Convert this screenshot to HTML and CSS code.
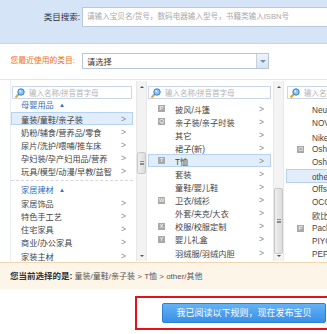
FILE: index.html
```html
<!DOCTYPE html>
<html lang="zh-CN">
<head>
<meta charset="utf-8">
<title>类目选择</title>
<link rel="stylesheet" href="styles.css">
</head>
<body>
<div class="page">
  <div class="top">
    <div class="lbl">类目搜索:</div>
    <div class="search-input">请输入宝贝名/货号，数码电器输入型号，书籍类输入ISBN号</div>
  </div>
  <div class="recent">
    <div class="lbl orange">您最近使用的类目:</div>
    <div class="select"><span>请选择</span><i class="sel-btn"><b></b></i></div>
  </div>

  <div class="panels">
    <div class="col col1">
      <div class="csearch"><svg class="mag" viewBox="0 0 10 10" width="10" height="10"><line x1="1.2" y1="8.8" x2="4" y2="6" stroke="#e9a323" stroke-width="2.2" stroke-linecap="round"/><circle cx="6" cy="4" r="3.2" fill="#8fc4f2" stroke="#2f7fd0" stroke-width="1"/><circle cx="5.2" cy="3.2" r="1" fill="#e6f3ff"/></svg><span>输入名称/拼音首字母</span></div>
      <div class="list">
        <div class="grp">母婴用品 <small>▲</small></div>
        <div class="row sel"><span>童装/童鞋/亲子装</span><em>&gt;</em></div>
        <div class="row"><span>奶粉/辅食/营养品/零食</span><em>&gt;</em></div>
        <div class="row"><span>尿片/洗护/喂哺/推车床</span><em>&gt;</em></div>
        <div class="row"><span>孕妇装/孕产妇用品/营养</span><em>&gt;</em></div>
        <div class="row"><span>玩具/模型/动漫/早教/益智</span><em>&gt;</em></div>
        <div class="sep"></div>
        <div class="grp">家居建材 <small>▲</small></div>
        <div class="row"><span>家居饰品</span><em>&gt;</em></div>
        <div class="row"><span>特色手工艺</span><em>&gt;</em></div>
        <div class="row"><span>住宅家具</span><em>&gt;</em></div>
        <div class="row"><span>商业/办公家具</span><em>&gt;</em></div>
        <div class="row"><span>家装主材</span><em>&gt;</em></div>
      </div>
    </div>
    <div class="vscroll s1">
      <div class="arr up"></div>
      <div class="track"><div class="thumb t1"><i></i></div></div>
      <div class="arr down"></div>
    </div>

    <div class="col col2">
      <div class="csearch"><svg class="mag" viewBox="0 0 10 10" width="10" height="10"><line x1="1.2" y1="8.8" x2="4" y2="6" stroke="#e9a323" stroke-width="2.2" stroke-linecap="round"/><circle cx="6" cy="4" r="3.2" fill="#8fc4f2" stroke="#2f7fd0" stroke-width="1"/><circle cx="5.2" cy="3.2" r="1" fill="#e6f3ff"/></svg><span>输入名称/拼音首字母</span></div>
      <div class="list l2">
        <div class="row"><b class="bd">P</b><span>披风/斗篷</span><em>&gt;</em></div>
        <div class="row"><b class="bd">Q</b><span>亲子装/亲子时装</span><em>&gt;</em></div>
        <div class="row"><b class="bd no"></b><span>其它</span><em>&gt;</em></div>
        <div class="row"><b class="bd no"></b><span>裙子(新)</span><em>&gt;</em></div>
        <div class="row sel"><b class="bd">T</b><span>T恤</span><em>&gt;</em></div>
        <div class="row"><b class="bd no"></b><span>套装</span><em>&gt;</em></div>
        <div class="row"><b class="bd no"></b><span>童鞋/婴儿鞋</span><em>&gt;</em></div>
        <div class="row"><b class="bd">W</b><span>卫衣/绒衫</span><em>&gt;</em></div>
        <div class="row"><b class="bd no"></b><span>外套/夹克/大衣</span><em>&gt;</em></div>
        <div class="row"><b class="bd">X</b><span>校服/校服定制</span><em>&gt;</em></div>
        <div class="row"><b class="bd">Y</b><span>婴儿礼盒</span><em>&gt;</em></div>
        <div class="row"><b class="bd no"></b><span>羽绒服/羽绒内胆</span><em>&gt;</em></div>
      </div>
    </div>
    <div class="vscroll s2">
      <div class="arr up"></div>
      <div class="track"><div class="thumb t2"><i></i></div></div>
      <div class="arr down"></div>
    </div>

    <div class="col col3">
      <div class="csearch"><svg class="mag" viewBox="0 0 10 10" width="10" height="10"><line x1="1.2" y1="8.8" x2="4" y2="6" stroke="#e9a323" stroke-width="2.2" stroke-linecap="round"/><circle cx="6" cy="4" r="3.2" fill="#8fc4f2" stroke="#2f7fd0" stroke-width="1"/><circle cx="5.2" cy="3.2" r="1" fill="#e6f3ff"/></svg><span>输入名称/拼音首字母</span></div>
      <div class="list l3">
        <div class="row"><b class="bd no"></b><span>Neue</span></div>
        <div class="row"><b class="bd no"></b><span>NOVA</span></div>
        <div class="row"><b class="bd no"></b><span>Nike/耐克</span></div>
        <div class="row"><b class="bd">O</b><span>Oshkosh</span></div>
        <div class="row"><b class="bd no"></b><span>Oshkosh</span></div>
        <div class="row sel"><b class="bd no"></b><span>other/其他</span></div>
        <div class="row"><b class="bd no"></b><span>Offside</span></div>
        <div class="row"><b class="bd no"></b><span>OCCHI</span></div>
        <div class="row"><b class="bd no"></b><span>欧比趣</span></div>
        <div class="row"><b class="bd">P</b><span>Paclantic</span></div>
        <div class="row"><b class="bd no"></b><span>PIYO</span></div>
        <div class="row"><b class="bd no"></b><span>PEPCO</span></div>
      </div>
    </div>
  </div>

  <div class="current">
    <strong>您当前选择的是:</strong> 童装/童鞋/亲子装 &gt; T恤 &gt; other/其他
  </div>

  <div class="action">
    <div class="redbox">
      <button class="publish">我已阅读以下规则，现在发布宝贝</button>
    </div>
  </div>
</div>
</body>
</html>
```

FILE: styles.css
```css
* { box-sizing: border-box; }
html, body { margin: 0; padding: 0; }
body {
  width: 327px;
  height: 334px;
  overflow: hidden;
  background: #fff;
  font-family: "Liberation Sans", "Noto Sans CJK SC", sans-serif;
  font-size: 8px;
  color: #333;
}
.page { width: 327px; }

.top {
  height: 44px;
  background: #d6e4f8;
  border-bottom: 1px solid #c4d5ee;
  display: flex;
  align-items: flex-start;
  padding-top: 7px;
}
.lbl {
  width: 82px;
  flex: none;
  text-align: right;
  padding-right: 2px;
  line-height: 20px;
  color: #333;
  font-size: 8.5px;
}
.search-input {
  flex: 1;
  height: 20px;
  line-height: 18px;
  background: #fff;
  border: 1px solid #b9c8dc;
  border-right: none;
  padding-left: 4px;
  color: #a8a8a8;
  font-size: 7.6px;
  white-space: nowrap;
  overflow: hidden;
}

.recent {
  height: 36px;
  border-bottom: 1px solid #e1e6ec;
  display: flex;
  align-items: flex-start;
  padding-top: 9px;
}
.recent .lbl { line-height: 16px; padding-right: 7px; font-size: 7.8px; }
.orange { color: #f26f12; }
.select {
  width: 187px;
  height: 16px;
  border: 1px solid #b8c5d6;
  background: #fff;
  display: flex;
  align-items: center;
  justify-content: space-between;
  padding-left: 4px;
  color: #333;
  font-size: 8.2px;
}
.sel-btn {
  width: 12px;
  height: 14px;
  background: linear-gradient(#eef4fb, #d6e3f2);
  border-left: 1px solid #c3d1e3;
  display: flex;
  align-items: center;
  justify-content: center;
}
.sel-btn b {
  width: 0; height: 0;
  border-left: 3px solid transparent;
  border-right: 3px solid transparent;
  border-top: 3px solid #7a8fa8;
}

.panels {
  height: 182px;
  display: flex;
  padding-left: 10px;
  background: #fff;
  overflow: hidden;
}
.col {
  flex: none;
  display: flex;
  flex-direction: column;
  padding-top: 6px;
  background: #fff;
  overflow: hidden;
}
.col1 { width: 123px; border-left: 1px solid #e8eef6; }
.col2 { width: 123px; margin-left: 1px; }
.col3 { width: 44px; margin-left: 1px; }

.csearch {
  height: 13px;
  border: 1px solid #c9d7e8;
  background: #fff;
  display: flex;
  align-items: center;
  padding-left: 2px;
  color: #b3b3b3;
  font-size: 7.5px;
  white-space: nowrap;
  overflow: hidden;
  flex: none;
}
.col1 .csearch { margin-left: 1px; margin-right: 1px; }
.col3 .csearch { margin-left: 2px; }
.mag { flex: none; margin-right: 4px; }

.list { flex: 1; font-size: 8.2px; }
.col1 .list { padding-top: 0; }
.l2 { padding-top: 3px; }
.l3 { padding-top: 5px; }

.row {
  height: 13.1px;
  display: flex;
  align-items: center;
  white-space: nowrap;
  border: 1px solid transparent;
  color: #444;
}
.col1 .row { padding-left: 9px; padding-right: 6px; }
.row span { flex: 1; overflow: hidden; }
.row em { font-style: normal; color: #8a8a8a; font-size: 8.5px; }
.row.sel { background: #e1edfb; border-color: #b7d2ef; }

.grp {
  height: 13.1px;
  line-height: 13px;
  padding-left: 10px;
  color: #2f6fc0;
}
.grp small { font-size: 6px; margin-left: 3px; vertical-align: 1px; }
.sep {
  height: 0;
  border-top: 1px dashed #d6d6d6;
  margin: 2px 0 3px;
}

.col2 .row { padding-left: 9px; padding-right: 6px; }
.bd {
  width: 7px;
  height: 7px;
  background: #a9a9a9;
  color: #fff;
  font-size: 6px;
  line-height: 7px;
  text-align: center;
  font-weight: normal;
  flex: none;
  margin-right: 10px;
}
.bd.no { background: transparent; }
.col3 .row { padding-left: 11px; }
.col3 .row.sel { margin-left: 1px; padding-left: 10px; }
.col3 .bd { margin-right: 8px; }

.vscroll {
  flex: none;
  width: 11px;
  height: 180px;
  margin-top: 1px;
  background: #f3f3f3;
  border-left: 1px solid #e8e8e8;
  border-right: 1px solid #e8e8e8;
  display: flex;
  flex-direction: column;
}
.s1 { margin-left: 3px; }
.s2 { margin-left: 2px; }
.arr {
  height: 11px;
  flex: none;
  display: flex;
  align-items: center;
  justify-content: center;
}
.arr.up::before {
  content: "";
  border-left: 2px solid transparent;
  border-right: 2px solid transparent;
  border-bottom: 2px solid #555;
}
.arr.down::before {
  content: "";
  border-left: 2px solid transparent;
  border-right: 2px solid transparent;
  border-top: 2px solid #555;
}
.track { flex: 1; position: relative; }
.thumb {
  position: absolute;
  left: 0; right: 0;
  background: linear-gradient(90deg, #eeeeee, #dcdcdc);
  border: 1px solid #c8c8c8;
  border-radius: 2px;
  display: flex;
  align-items: center;
  justify-content: center;
}
.thumb i {
  width: 4px;
  height: 4px;
  border-top: 1px solid #8c8c8c;
  border-bottom: 1px solid #8c8c8c;
  position: relative;
}
.thumb i::after {
  content: "";
  position: absolute;
  left: 0; right: 0; top: 1px;
  border-top: 1px solid #8c8c8c;
}
.t1 { top: 60px; height: 22px; }
.t2 { top: 96px; height: 66px; }

.current {
  height: 27px;
  background: #fef5e9;
  border-top: 1px solid #f3d6ad;
  padding-left: 10px;
  line-height: 27px;
  color: #555;
  font-size: 8px;
  white-space: nowrap;
}
.current strong { color: #333; font-size: 8.5px; }

.action {
  padding-top: 7px;
  padding-left: 135px;
}
.redbox {
  width: 200px;
  height: 34px;
  border: 2px solid #e4101a;
  padding-top: 5px;
  padding-left: 25px;
}
.publish {
  display: block;
  width: 164px;
  height: 20px;
  border: 1px solid #2f7fd6;
  border-radius: 2px;
  background: linear-gradient(#64b3f6, #3a8fe6);
  color: #fff;
  font-family: "Noto Sans CJK SC", sans-serif;
  font-size: 9px;
  padding: 0;
  line-height: 18px;
  text-align: center;
}
```
